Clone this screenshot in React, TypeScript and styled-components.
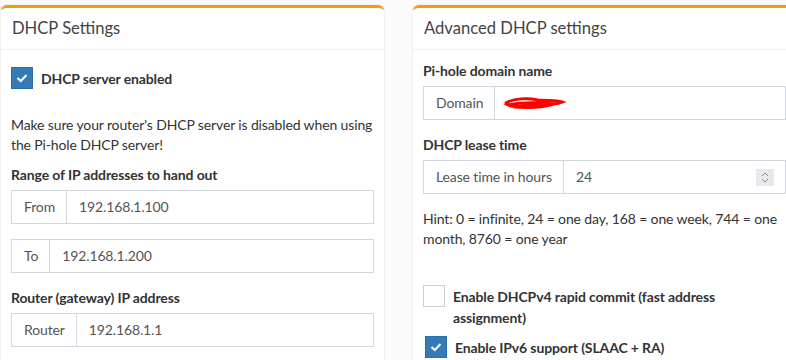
import React from "react";
import styled, { createGlobalStyle } from "styled-components";

const Global = createGlobalStyle`
  html, body { margin: 0; padding: 0; background: #fbfbfb; overflow: hidden; }
  body { font-family: "Lato", "Source Sans Pro", sans-serif; font-size: 14px; letter-spacing: -0.13px; color: #333; line-height: 1.42857; }
  * { box-sizing: border-box; }
`;

const Row = styled.div`
  display: grid;
  grid-template-columns: 383px 383px;
  column-gap: 29px;
  padding: 5px 0 0 1px;
  width: 100%;
  height: 360px;
  overflow: hidden;
`;

const Box = styled.div`
  background: #fff;
  border-top: 3px solid #f39c12;
  border-radius: 6px 6px 0 0;
  box-shadow: 0 0 0 1px #f0f0f0;
  height: 360px;
`;

const Header = styled.div`
  padding: 10px 10px 9px 11px;
  border-bottom: 1px solid #f0f0f0;
`;

const Title = styled.h3`
  margin: 0;
  font-size: 16.6px;
  font-weight: 400;
  letter-spacing: 0;
  line-height: 21.6px;
  color: #444;
`;

const Body = styled.div`
  padding: 11px 10px 10px 10px;
`;

const CheckRow = styled.div<{ $mt?: number }>`
  display: flex;
  align-items: flex-start;
  gap: 8px;
  margin-top: ${(p) => p.$mt ?? 0}px;
`;

const Check = styled.span<{ $on?: boolean; $ml?: number }>`
  flex: none;
  width: 22px;
  height: 22px;
  margin-left: ${(p) => p.$ml ?? 0}px;
  border: 1px solid ${(p) => (p.$on ? "#2e6da4" : "#d3cfc8")};
  background: ${(p) => (p.$on ? "#337ab7" : "#fff")};
  display: flex;
  align-items: center;
  justify-content: center;
`;

const CheckLabel = styled.span`
  font-weight: 700;
  line-height: 21px;
  padding-top: 1px;
`;

const Para = styled.p<{ $mt?: number }>`
  margin: ${(p) => p.$mt ?? 0}px 0 0;
  line-height: 20px;
`;

const Label = styled.div<{ $mt?: number }>`
  font-weight: 700;
  margin-top: ${(p) => p.$mt ?? 0}px;
  margin-bottom: 5px;
  line-height: 20px;
`;

const Group = styled.div<{ $mt?: number }>`
  display: flex;
  height: 34px;
  border: 1px solid #d2d6de;
  margin-top: ${(p) => p.$mt ?? 0}px;
`;

const Addon = styled.span`
  flex: none;
  padding: 0 11px 0 12px;
  display: flex;
  align-items: center;
  color: #555;
  border-right: 1px solid #d2d6de;
`;

const Value = styled.span`
  flex: 1;
  display: flex;
  align-items: center;
  padding: 0 12px;
  color: #555;
  position: relative;
`;

const Spinner = styled.span`
  position: absolute;
  right: 11px;
  top: 8px;
  width: 18px;
  height: 17px;
  background: #e9e9ed;
  display: flex;
  align-items: center;
  justify-content: center;
`;

const Tick = () => (
  <svg width="12" height="10" viewBox="0 0 12 10">
    <path d="M1.5 5 L4.8 8 L10.5 2" fill="none" stroke="#fff" strokeWidth="2" />
  </svg>
);

const Scribble = () => (
  <svg width="64" height="16" viewBox="0 0 64 16" style={{ marginLeft: -3 }}>
    <path
      d="M2 8 C10 3 24 3 34 5 C44 6 52 5 58 7 C50 10 36 10 20 11 C12 12 6 11 4 10 C14 8 30 7 50 9 C40 12 24 13 10 12"
      fill="none"
      stroke="#f00"
      strokeWidth="3"
      strokeLinecap="round"
    />
  </svg>
);

export default function App() {
  return (
    <>
      <Global />
      <Row>
        <Box>
          <Header>
            <Title>DHCP Settings</Title>
          </Header>
          <Body>
            <CheckRow $mt={6}>
              <Check $on>
                <Tick />
              </Check>
              <CheckLabel>DHCP server enabled</CheckLabel>
            </CheckRow>
            <Para $mt={26}>
              Make sure your router's DHCP server is disabled when using the Pi-hole DHCP server!
            </Para>
            <Label $mt={10}>Range of IP addresses to hand out</Label>
            <Group>
              <Addon>From</Addon>
              <Value>192.168.1.100</Value>
            </Group>
            <Group $mt={15}>
              <Addon>To</Addon>
              <Value>192.168.1.200</Value>
            </Group>
            <Label $mt={15}>Router (gateway) IP address</Label>
            <Group>
              <Addon>Router</Addon>
              <Value>192.168.1.1</Value>
            </Group>
          </Body>
        </Box>
        <Box>
          <Header>
            <Title>Advanced DHCP settings</Title>
          </Header>
          <Body>
            <Label>Pi-hole domain name</Label>
            <Group>
              <Addon>Domain</Addon>
              <Value>
                <Scribble />
              </Value>
            </Group>
            <Label $mt={15}>DHCP lease time</Label>
            <Group>
              <Addon>Lease time in hours</Addon>
              <Value>
                24
                <Spinner>
                  <svg width="10" height="13" viewBox="0 0 10 13">
                    <path d="M2 5 L5 2 L8 5 M2 8 L5 11 L8 8" fill="none" stroke="#8a8a8e" strokeWidth="1" />
                  </svg>
                </Spinner>
              </Value>
            </Group>
            <Para $mt={15}>
              Hint: 0 = infinite, 24 = one day, 168 = one week, 744 = one month, 8760 = one year
            </Para>
            <CheckRow $mt={36}>
              <Check />
              <CheckLabel>Enable DHCPv4 rapid commit (fast address assignment)</CheckLabel>
            </CheckRow>
            <CheckRow $mt={8}>
              <Check $on $ml={2}>
                <Tick />
              </Check>
              <CheckLabel>Enable IPv6 support (SLAAC + RA)</CheckLabel>
            </CheckRow>
          </Body>
        </Box>
      </Row>
    </>
  );
}
